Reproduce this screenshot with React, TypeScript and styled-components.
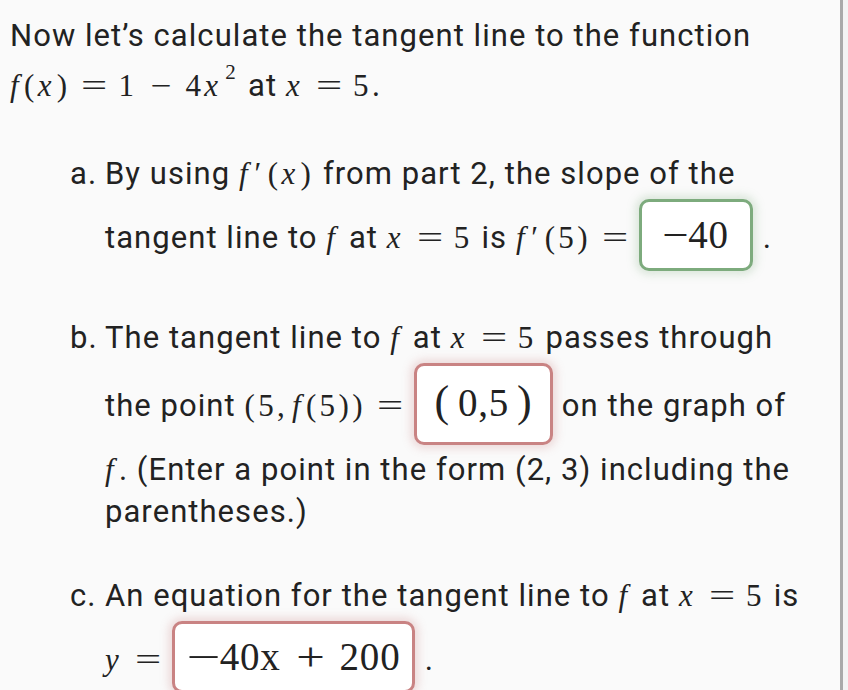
import styled, { createGlobalStyle } from 'styled-components'

const GlobalStyle = createGlobalStyle`
  html, body {
    margin: 0;
    padding: 0;
    background: #fafafa;
  }
  body {
    font-family: Roboto, 'Noto Sans', Arial, sans-serif;
  }
`

const Screen = styled.div`
  display: flex;
  width: 848px;
  height: 690px;
  overflow: hidden;
  background: #fafafa;
`

const Content = styled.main`
  flex: 1;
  padding: 11px 24px 0 10px;
  color: #222;
  font-size: 31px;
  letter-spacing: 1.05px;
`

const ScrollTrack = styled.div`
  display: flex;
  width: 8px;
  background: #f3f3f3;
`

const ScrollThumb = styled.div`
  width: 3px;
  background: #a9a9a9;
`

const Intro = styled.p`
  margin: 0;
  line-height: 50px;
`

const Parts = styled.ol`
  display: flex;
  flex-direction: column;
  gap: 42px;
  margin: 42px 0 0 60px;
  padding: 0;
  list-style: none;
`

const Part = styled.li`
  display: grid;
  grid-template-columns: 35px 1fr;
  line-height: 42px;
`

const Label = styled.span``

/* inline math, set in a serif in place of the TeX fonts */
const M = styled.span`
  font-family: 'Liberation Serif', 'Times New Roman', serif;
  font-size: 31px;
  line-height: 1;
  letter-spacing: 0.11em;
  white-space: nowrap;
`

const V = styled.i`
  font-style: italic;
  padding-right: 0.06em;
`

const Prime = styled.span`
  margin: 0 0.1em 0 0.05em;
`

const Comma = styled.span`
  margin-right: 0.12em;
`

const Op = styled.span<{ $w: string; $s: number }>`
  display: inline-block;
  width: ${({ $w }) => $w};
  text-align: center;
  letter-spacing: 0;
  transform: scaleX(${({ $s }) => $s});
`

const Sup = styled.sup`
  font-size: 21px;
  line-height: 1;
  vertical-align: 17px;
  margin-left: 2px;
`

const Answer = styled.span<{ $tone: 'good' | 'bad'; $w: number; $tall?: boolean }>`
  display: inline-block;
  box-sizing: border-box;
  width: ${({ $w }) => $w}px;
  margin: 4px 0;
  padding: ${({ $tall }) => ($tall ? '18px 0 20px' : '14px 0')};
  border: 3px solid ${({ $tone }) => ($tone === 'good' ? '#7dab7d' : '#c98383')};
  border-radius: 10px;
  background: #fff;
  box-shadow: 0 0 10px 3px
    ${({ $tone }) => ($tone === 'good' ? 'rgba(125, 171, 125, 0.28)' : 'rgba(201, 131, 131, 0.3)')};
  font-family: 'Liberation Serif', 'Times New Roman', serif;
  font-size: 39px;
  line-height: 38px;
  text-align: center;
  letter-spacing: 0.02em;
  white-space: nowrap;
  color: #222;
`

const Paren = styled.span`
  font-size: 44px;
  font-weight: 300;
  line-height: 0;
  margin: 0 8px;
`

const Dot = styled.span`
  font-family: 'Liberation Serif', 'Times New Roman', serif;
  font-size: 30px;
  margin-left: 10px;
`

const Eq = () => <Op $w="1.55em" $s={1.5}>=</Op>

export default function App() {
  return (
    <>
      <GlobalStyle />
      <Screen>
        <Content>
          <Intro>
            Now let’s calculate the tangent line to the function{' '}
            <M>
              <V>f</V>(<V>x</V>)<Eq />1<Op $w="1.55em" $s={1.2}>−</Op>4<V>x</V>
              <Sup>2</Sup>
            </M>{' '}
            at{' '}
            <M>
              <V>x</V>
              <Eq />
              5.
            </M>
          </Intro>

          <Parts>
            <Part>
              <Label>a.</Label>
              <div>
                By using{' '}
                <M>
                  <V>f</V>
                  <Prime>′</Prime>(<V>x</V>)
                </M>{' '}
                from part 2, the slope of the tangent line to{' '}
                <M>
                  <V>f</V>
                </M>{' '}
                at{' '}
                <M>
                  <V>x</V>
                  <Eq />5
                </M>{' '}
                is{' '}
                <M>
                  <V>f</V>
                  <Prime>′</Prime>(5)
                  <Eq />
                </M>
                <Answer $tone="good" $w={114}>
                  <Op $w="25px" $s={1.2}>−</Op>40
                </Answer>
                <Dot>.</Dot>
              </div>
            </Part>

            <Part>
              <Label>b.</Label>
              <div>
                The tangent line to{' '}
                <M>
                  <V>f</V>
                </M>{' '}
                at{' '}
                <M>
                  <V>x</V>
                  <Eq />5
                </M>{' '}
                passes through the point{' '}
                <M>
                  (5<Comma>,</Comma>
                  <V>f</V>(5))
                  <Eq />
                </M>
                <Answer $tone="bad" $w={139} $tall>
                  <Paren>(</Paren>0,5<Paren>)</Paren>
                </Answer>{' '}
                on the graph of{' '}
                <M>
                  <V>f</V>
                </M>
                . (Enter a point in the form (2, 3) including the parentheses.)
              </div>
            </Part>

            <Part>
              <Label>c.</Label>
              <div>
                An equation for the tangent line to{' '}
                <M>
                  <V>f</V>
                </M>{' '}
                at{' '}
                <M>
                  <V>x</V>
                  <Eq />5
                </M>{' '}
                is{' '}
                <M>
                  <V>y</V>
                  <Eq />
                </M>
                <Answer $tone="bad" $w={243}>
                  <Op $w="33px" $s={1.55}>−</Op>40x<Op $w="59px" $s={1.3}>+</Op>200
                </Answer>
                <Dot>.</Dot>
              </div>
            </Part>
          </Parts>
        </Content>
        <ScrollTrack>
          <ScrollThumb />
        </ScrollTrack>
      </Screen>
    </>
  )
}
